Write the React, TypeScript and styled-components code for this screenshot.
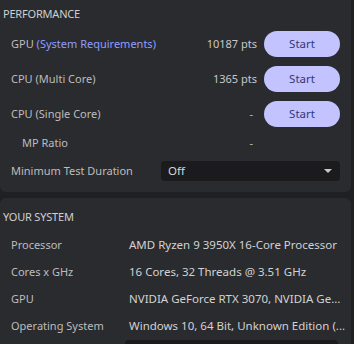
import React from 'react';
import styled, { createGlobalStyle } from 'styled-components';

const GlobalStyle = createGlobalStyle`
  html, body {
    margin: 0;
    padding: 0;
    background: #1f2023;
    overflow: hidden;
  }
  body {
    font-family: 'Noto Sans', 'Open Sans', sans-serif;
    font-size: 11px;
    color: #c4c4c4;
  }
`;

const Page = styled.div`
  width: 351px;
  height: 344px;
  display: flex;
  flex-direction: column;
  gap: 6px;
  overflow: hidden;
`;

const Panel = styled.section<{ top?: boolean }>`
  background: #2a2b2f;
  border-radius: ${({ top }) => (top ? '0 0 6px 6px' : '6px 6px 0 0')};
  padding: ${({ top }) => (top ? '6px 0 5px' : '11px 0 0')};
  flex-shrink: 0;
`;

const Title = styled.div`
  height: 16px;
  line-height: 16px;
  padding-left: 3px;
  color: #cfcfcf;
  letter-spacing: -0.2px;
`;

const TestRow = styled.div<{ h: number }>`
  height: ${({ h }) => h}px;
  display: grid;
  grid-template-columns: 1fr auto 76px;
  align-items: center;
  column-gap: 6px;
  padding: 0 11px 0 11px;
`;

const Label = styled.span<{ indent?: boolean }>`
  padding-left: ${({ indent }) => (indent ? '11px' : '0')};
  color: #bdbdbd;
  white-space: nowrap;
`;

const Link = styled.span`
  color: #8f9dff;
`;

const Score = styled.span`
  color: #c8c8c8;
  text-align: right;
  padding-right: 1px;
`;

const Dash = styled.span`
  color: #bdbdbd;
  text-align: right;
  padding-right: 5px;
`;

const StartButton = styled.button`
  height: 26px;
  width: 76px;
  border: none;
  border-radius: 13px;
  background: #c3c3ff;
  color: #33367a;
  font-family: 'Noto Sans', 'Open Sans', sans-serif;
  font-size: 11.5px;
  padding: 0;
  cursor: pointer;
`;

const DurationRow = styled.div`
  height: 33px;
  display: grid;
  grid-template-columns: 150px 1fr;
  align-items: center;
  padding: 0 11px;
`;

const Select = styled.div`
  height: 20px;
  background: #1b1b1d;
  border-radius: 4px;
  display: flex;
  align-items: center;
  justify-content: space-between;
  padding: 0 8px 0 7px;
  color: #d6d6d6;
  font-size: 11.5px;
`;

const Caret = styled.span`
  width: 0;
  height: 0;
  border-left: 4px solid transparent;
  border-right: 4px solid transparent;
  border-top: 4px solid #c8c8c8;
`;

const InfoList = styled.div`
  padding-top: 6px;
  display: flex;
  flex-direction: column;
`;

const InfoRow = styled.div`
  height: 27px;
  display: grid;
  grid-template-columns: 118px 1fr;
  align-items: center;
  padding: 0 12px 0 11px;
`;

const Value = styled.span`
  color: #d2d2d2;
  font-size: 11.5px;
  white-space: nowrap;
`;

const ValueBox = styled.div`
  margin-left: 125px;
  margin-right: 13px;
  margin-top: 1px;
  height: 20px;
  background: #1b1b1d;
  border-radius: 4px;
`;

const tests = [
  { name: 'GPU', link: '(System Requirements)', score: '10187 pts' },
  { name: 'CPU (Multi Core)', score: '1365 pts' },
  { name: 'CPU (Single Core)', score: '-' },
];

const system = [
  ['Processor', 'AMD Ryzen 9 3950X 16-Core Processor'],
  ['Cores x GHz', '16 Cores, 32 Threads @ 3.51 GHz'],
  ['GPU', 'NVIDIA GeForce RTX 3070, NVIDIA Ge...'],
  ['Operating System', 'Windows 10, 64 Bit, Unknown Edition (...'],
];

const App = () => (
  <>
    <GlobalStyle />
    <Page>
      <Panel top>
        <Title>PERFORMANCE</Title>
        <div style={{ height: 4 }} />
        {tests.map((t) => (
          <TestRow h={35} key={t.name}>
            <Label>
              {t.name} {t.link && <Link>{t.link}</Link>}
            </Label>
            {t.score === '-' ? <Dash>-</Dash> : <Score>{t.score}</Score>}
            <StartButton>Start</StartButton>
          </TestRow>
        ))}
        <TestRow h={23}>
          <Label indent>MP Ratio</Label>
          <Dash>-</Dash>
          <span />
        </TestRow>
        <DurationRow>
          <Label>Minimum Test Duration</Label>
          <Select>
            Off
            <Caret />
          </Select>
        </DurationRow>
      </Panel>
      <Panel>
        <Title>YOUR SYSTEM</Title>
        <InfoList>
          {system.map(([k, v]) => (
            <InfoRow key={k}>
              <Label>{k}</Label>
              <Value>{v}</Value>
            </InfoRow>
          ))}
        </InfoList>
        <ValueBox />
      </Panel>
    </Page>
  </>
);

export default App;
